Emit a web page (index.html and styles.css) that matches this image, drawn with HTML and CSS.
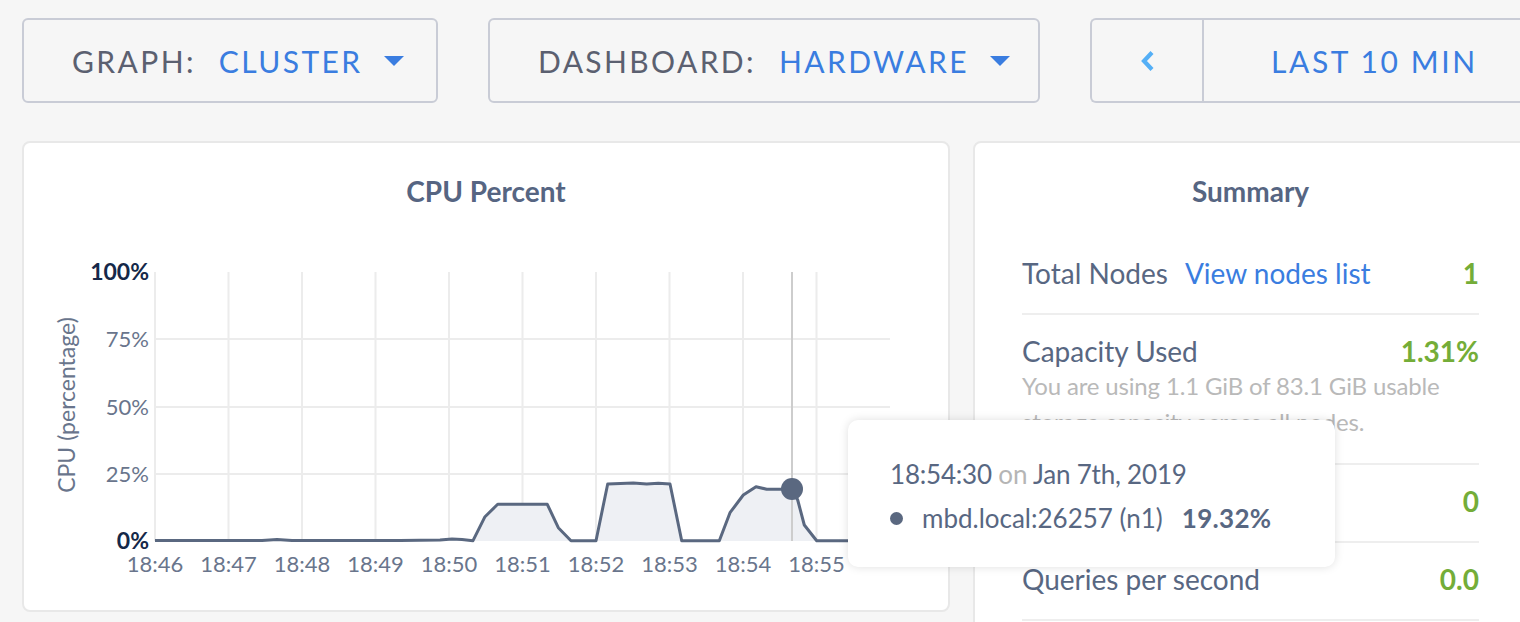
FILE: index.html
```html
<!DOCTYPE html>
<html lang="en">
<head>
<meta charset="utf-8">
<title>Hardware Dashboard</title>
<link rel="stylesheet" href="styles.css">
</head>
<body>
<div class="page">
  <header class="toolbar">
    <div class="dropdown dropdown--graph">
      <span class="dropdown__label">Graph:</span>
      <span class="dropdown__value">Cluster</span>
      <span class="dropdown__caret"></span>
    </div>
    <div class="dropdown dropdown--dash">
      <span class="dropdown__label">Dashboard:</span>
      <span class="dropdown__value">Hardware</span>
      <span class="dropdown__caret"></span>
    </div>
    <div class="timebar">
      <div class="timebar__prev">
        <svg class="chevron" width="16" height="22" viewBox="0 0 16 22"><polyline points="12,2.5 4,11 12,19.5" fill="none" stroke="#54aff6" stroke-width="4.2"/></svg>
      </div>
      <div class="timebar__range">Last 10 min</div>
    </div>
  </header>

  <main class="content">
    <section class="card chart-card">
      <h2 class="card__title">CPU Percent</h2>
      <svg class="chart" width="924" height="402" viewBox="24 208 924 402">
        <g class="grid">
          <line x1="155" y1="272" x2="155" y2="541"/>
          <line x1="228.5" y1="272" x2="228.5" y2="541"/>
          <line x1="302" y1="272" x2="302" y2="541"/>
          <line x1="375.5" y1="272" x2="375.5" y2="541"/>
          <line x1="449" y1="272" x2="449" y2="541"/>
          <line x1="522.5" y1="272" x2="522.5" y2="541"/>
          <line x1="596" y1="272" x2="596" y2="541"/>
          <line x1="669.5" y1="272" x2="669.5" y2="541"/>
          <line x1="743" y1="272" x2="743" y2="541"/>
          <line x1="816.5" y1="272" x2="816.5" y2="541"/>
          <line x1="155" y1="339" x2="890" y2="339"/>
          <line x1="155" y1="407" x2="890" y2="407"/>
          <line x1="155" y1="474" x2="890" y2="474"/>
        </g>
        <path class="area" d="M155,540.5 L200,540.5 L262,540.5 L277,539.5 L292,540.5 L400,540.5 L440,540 L452,539 L462,539.5 L473,540.7 L485,516.7 L497.7,504.3 L547.3,504.3 L558.3,527.7 L571,540.7 L596,540.7 L607.7,484 L633.3,483 L646.7,484 L658.3,483.3 L670,484 L681.7,540.7 L719.3,540.7 L730,512.7 L743.3,495 L756,486.7 L766.7,489.3 L792.3,489.3 L797.7,500 L804.3,525 L816.7,540.7 L890,540.7 L890,541 L155,541 Z"/>
        <line class="cursor" x1="792" y1="272" x2="792" y2="541"/>
        <path class="series" d="M155,540.5 L200,540.5 L262,540.5 L277,539.5 L292,540.5 L400,540.5 L440,540 L452,539 L462,539.5 L473,540.7 L485,516.7 L497.7,504.3 L547.3,504.3 L558.3,527.7 L571,540.7 L596,540.7 L607.7,484 L633.3,483 L646.7,484 L658.3,483.3 L670,484 L681.7,540.7 L719.3,540.7 L730,512.7 L743.3,495 L756,486.7 L766.7,489.3 L792.3,489.3 L797.7,500 L804.3,525 L816.7,540.7 L890,540.7"/>
        <circle class="hover-dot" cx="792" cy="489" r="11"/>

        <text class="y-tick y-tick--bold" x="149" y="280">100%</text>
        <text class="y-tick" x="149" y="347">75%</text>
        <text class="y-tick" x="149" y="415">50%</text>
        <text class="y-tick" x="149" y="482">25%</text>
        <text class="y-tick y-tick--bold" x="149" y="549">0%</text>

        <text class="x-tick" x="155" y="572">18:46</text>
        <text class="x-tick" x="228.5" y="572">18:47</text>
        <text class="x-tick" x="302" y="572">18:48</text>
        <text class="x-tick" x="375.5" y="572">18:49</text>
        <text class="x-tick" x="449" y="572">18:50</text>
        <text class="x-tick" x="522.5" y="572">18:51</text>
        <text class="x-tick" x="596" y="572">18:52</text>
        <text class="x-tick" x="669.5" y="572">18:53</text>
        <text class="x-tick" x="743" y="572">18:54</text>
        <text class="x-tick" x="816.5" y="572">18:55</text>

        <text class="axis-title" x="75" y="405" transform="rotate(-90 75 405)">CPU (percentage)</text>
      </svg>
    </section>

    <section class="card summary-card">
      <h2 class="card__title">Summary</h2>
      <ul class="summary">
        <li class="summary__row">
          <div class="summary__head">
            <span class="summary__label">Total Nodes</span>
            <a class="summary__link" href="#">View nodes list</a>
            <span class="summary__value">1</span>
          </div>
        </li>
        <li class="summary__row">
          <div class="summary__head">
            <span class="summary__label">Capacity Used</span>
            <span class="summary__value">1.31%</span>
          </div>
          <p class="summary__note">You are using 1.1 GiB of 83.1 GiB usable storage capacity across all nodes.</p>
        </li>
        <li class="summary__row">
          <div class="summary__head">
            <span class="summary__label">Unavailable ranges</span>
            <span class="summary__value">0</span>
          </div>
        </li>
        <li class="summary__row">
          <div class="summary__head">
            <span class="summary__label">Queries per second</span>
            <span class="summary__value">0.0</span>
          </div>
        </li>
      </ul>
    </section>
  </main>

  <div class="tooltip">
    <div class="tooltip__time">18:54:30 <span class="tooltip__on">on</span> Jan 7th, 2019</div>
    <div class="tooltip__row">
      <span class="tooltip__dot"></span>
      <span class="tooltip__series">mbd.local:26257 (n1)</span>
      <span class="tooltip__value">19.32%</span>
    </div>
  </div>
</div>
</body>
</html>
```

FILE: styles.css
```css
html, body {
  margin: 0;
  padding: 0;
}

body {
  width: 1520px;
  height: 622px;
  overflow: hidden;
  background: #f6f6f6;
  font-family: Lato, "Open Sans", "Liberation Sans", sans-serif;
  color: #586782;
}

.page {
  position: relative;
  width: 1520px;
  height: 622px;
  padding: 18px 0 0 22px;
  box-sizing: border-box;
}

/* ---------- toolbar ---------- */
.toolbar {
  display: flex;
  gap: 50px;
  height: 85px;
  white-space: nowrap;
}

.dropdown {
  display: flex;
  align-items: center;
  box-sizing: border-box;
  height: 85px;
  padding: 0 0 0 48px;
  border: 2px solid #c9ccd6;
  border-radius: 6px;
  font-size: 30px;
  letter-spacing: 2.4px;
  text-transform: uppercase;
  flex-shrink: 0;
}

.dropdown--graph { width: 416px; }
.dropdown--dash { width: 552px; }

.dropdown__label { color: #5b6070; }

.dropdown__value {
  margin-left: 23px;
  color: #3a7de0;
}

.dropdown__caret {
  width: 0;
  height: 0;
  margin-left: 21px;
  border-left: 10px solid transparent;
  border-right: 10px solid transparent;
  border-top: 10px solid #3a7de0;
}

.timebar {
  display: flex;
  height: 85px;
  box-sizing: border-box;
  border: 2px solid #c9ccd6;
  border-right: none;
  border-radius: 6px 0 0 6px;
  flex-shrink: 0;
}

.timebar__prev {
  display: flex;
  align-items: center;
  justify-content: center;
  width: 110px;
  border-right: 2px solid #c9ccd6;
}

.chevron { display: block; margin-left: 2px; }

.timebar__range {
  display: flex;
  align-items: center;
  padding: 0 68px 0 67px;
  font-size: 30px;
  letter-spacing: 2.6px;
  text-transform: uppercase;
  color: #3a7de0;
}

/* ---------- cards ---------- */
.content {
  display: flex;
  align-items: flex-start;
  gap: 23px;
  margin-top: 38px;
}

.card {
  flex-shrink: 0;
  box-sizing: border-box;
  height: 471px;
  padding-top: 31px;
  background: #fff;
  border: 2px solid #e8e8e8;
  border-radius: 8px;
}

.card__title {
  margin: 0;
  font-size: 28px;
  line-height: 34px;
  font-weight: 700;
  text-align: center;
  color: #566582;
}

.chart-card { width: 928px; }

.chart {
  display: block;
  font-family: Lato, "Open Sans", "Liberation Sans", sans-serif;
}

.grid line {
  stroke: #ececec;
  stroke-width: 2;
}

.area { fill: #eef0f4; }

.series {
  fill: none;
  stroke: #5a6880;
  stroke-width: 3;
  stroke-linejoin: round;
}

.cursor {
  stroke: #cdcdcd;
  stroke-width: 2;
}

.hover-dot { fill: #5a6880; }

.y-tick {
  font-size: 22px;
  fill: #69758c;
  text-anchor: end;
}

.y-tick--bold {
  font-size: 23px;
  font-weight: 700;
  fill: #152849;
}

.x-tick {
  font-size: 22px;
  fill: #69758c;
  text-anchor: middle;
}

.axis-title {
  font-size: 23px;
  fill: #69758c;
  text-anchor: middle;
}

/* ---------- summary ---------- */
.summary-card {
  width: 554px;
  height: 540px;
  padding-left: 47px;
  padding-right: 46px;
}

.summary {
  list-style: none;
  margin: 29px 0 0;
  padding: 0;
}

.summary__row {
  padding: 19px 0 23px;
  border-bottom: 2px solid #eeeeee;
}

.summary__head {
  display: flex;
  align-items: baseline;
  font-size: 28px;
  line-height: 34px;
  white-space: nowrap;
}

.summary__label { color: #586782; }

.summary__link {
  margin-left: 17px;
  color: #3a7de0;
  text-decoration: none;
}

.summary__value {
  margin-left: auto;
  font-weight: 700;
  color: #74ad38;
}

.summary__note {
  margin: 0;
  font-size: 24px;
  line-height: 36px;
  letter-spacing: -0.15px;
  color: #b9b9b9;
}

/* ---------- tooltip ---------- */
.tooltip {
  position: absolute;
  left: 848px;
  top: 420px;
  width: 487px;
  height: 147px;
  box-sizing: border-box;
  padding: 32px 0 0 42px;
  background: #fff;
  border-radius: 10px;
  box-shadow: 0 0 10px rgba(0, 0, 0, 0.13);
  font-size: 26px;
  line-height: 44px;
  color: #586782;
  white-space: nowrap;
}

.tooltip__time { letter-spacing: -0.2px; }

.tooltip__on { color: #b5b5b5; }

.tooltip__row {
  display: flex;
  align-items: center;
}

.tooltip__dot {
  width: 13px;
  height: 13px;
  border-radius: 50%;
  background: #5a6880;
  margin-right: 19px;
}

.tooltip__value {
  margin-left: 19px;
  font-weight: 700;
  letter-spacing: 0.3px;
}
```
